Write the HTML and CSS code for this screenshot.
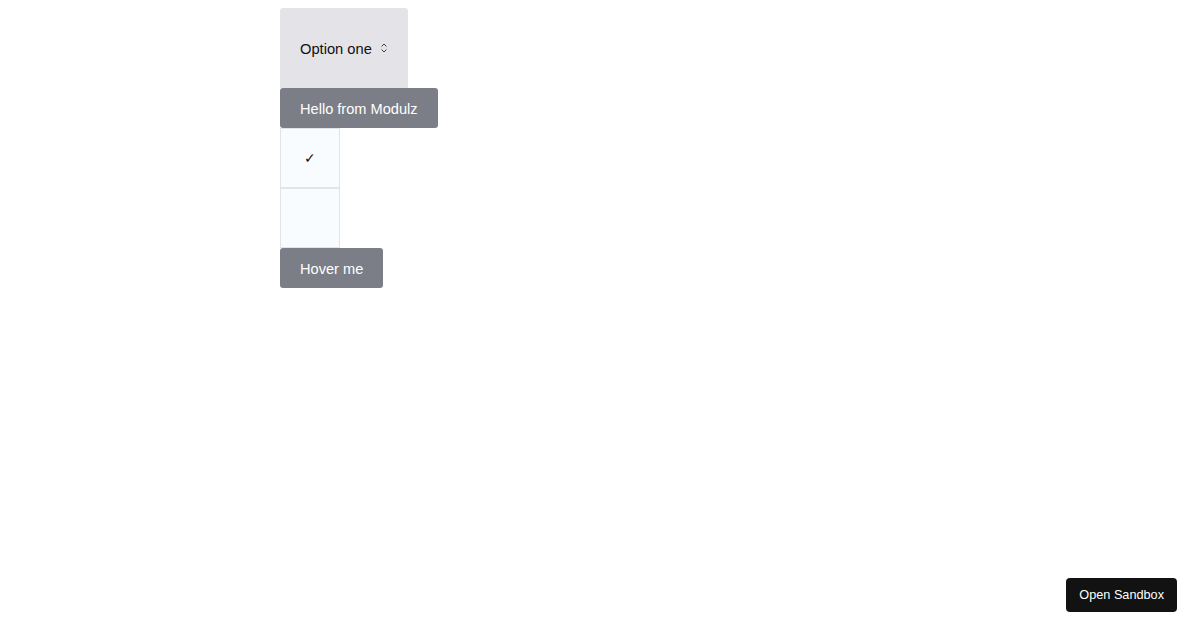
FILE: index.html
```html
<!DOCTYPE html>
<html>
<head>
<meta charset="utf-8">
<link rel="stylesheet" href="styles.css">
</head>
<body>
<div class="stack">
  <div class="select">
    <span>Option one</span>
    <svg class="chev" width="8" height="10" viewBox="0 0 8 10"><path d="M1.5 3.5 L4 1 L6.5 3.5 M1.5 6.5 L4 9 L6.5 6.5" fill="none" stroke="#444" stroke-width="1"/></svg>
  </div>
  <div class="tip">Hello from Modulz</div>
  <div class="check"><span class="mark">✓</span></div>
  <div class="check second"></div>
  <div class="tip">Hover me</div>
</div>
<button class="sandbox">Open Sandbox</button>
</body>
</html>
```
FILE: styles.css
```css
html, body { margin: 0; padding: 0; background: #fff; }
body {
  font-family: "Liberation Sans", Arial, sans-serif;
  padding: 8px 0 0 280px;
  height: 630px;
  box-sizing: border-box;
  position: relative;
}
.stack { display: flex; flex-direction: column; align-items: flex-start; }
.select {
  width: 128px; height: 80px; box-sizing: border-box;
  background: #e4e3e8; border-radius: 3px 3px 0 0;
  display: flex; align-items: center; justify-content: space-between;
  padding: 2px 20px 0 20px; font-size: 14.7px; color: #111;
}
.chev { margin-top: -2px; }
.tip {
  height: 40px; box-sizing: border-box; padding: 2px 20px 0;
  display: flex; align-items: center;
  background: #7b7e86; color: #fff; font-size: 14.6px;
  border-radius: 3px;
}
.check {
  width: 60px; height: 60px; box-sizing: border-box;
  background: #f9fcff; border: 1px solid #e4e3e8;
  display: flex; align-items: center; justify-content: center;
  font-size: 14px; color: #111;
}
.sandbox {
  position: absolute; right: 23px; bottom: 18px;
  height: 34px; padding: 0 13px 1px;
  background: #121212; color: #fff; border: 0; border-radius: 4px;
  font-family: "Liberation Sans", Arial, sans-serif; font-size: 12.7px;
}
```
